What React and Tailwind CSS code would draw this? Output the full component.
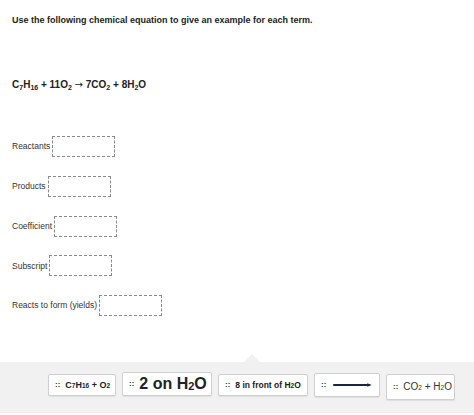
const FONT = { fontFamily: '"Liberation Sans", Arial, sans-serif' };

const TERMS = ['Reactants', 'Products', 'Coefficient', 'Subscript', 'Reacts to form (yields)'];

function Grip() {
  return <span className="text-[8px] font-bold text-[#333] leading-none mr-[5px]">::</span>;
}

function DropBox() {
  return <div className="w-[63px] h-[21px] shrink-0 border border-dashed border-[#8a8a8a]" />;
}

function Sub({ size = 'text-[6.5px]', children }) {
  return <sub className={`${size} leading-none`}>{children}</sub>;
}

function Chip({ className = '', children }) {
  return (
    <div className={`flex items-center shrink-0 whitespace-nowrap leading-none bg-white border border-[#cfcfcf] rounded-[2px] shadow-[0_1px_1px_rgba(0,0,0,0.08)] px-[6px] ${className}`}>
      <Grip />
      {children}
    </div>
  );
}

export default function App() {
  return (
    <div className="w-[474px] h-[415px] bg-white text-[#222] flex flex-col" style={FONT}>
      <div className="px-[12px] pt-[14px] flex-1">
        <p className="text-[9px] font-bold leading-[12px] whitespace-nowrap">
          Use the following chemical equation to give an example for each term.
        </p>
        <p className="mt-[53px] text-[10px] font-bold leading-[12px] whitespace-nowrap">
          C<Sub size="text-[7px]">7</Sub>H<Sub size="text-[7px]">16</Sub> + 11O<Sub size="text-[7px]">2</Sub>{' '}
          <span className="font-normal" style={{ fontFamily: '"DejaVu Sans", sans-serif' }}>→</span>{' '}
          7CO<Sub size="text-[7px]">2</Sub> + 8H<Sub size="text-[7px]">2</Sub>O
        </p>
        <div className="mt-[45px] flex flex-col gap-[18.8px]">
          {TERMS.map(label => (
            <div key={label} className="flex items-center h-[21px] gap-[2px]">
              <span className="text-[8.5px] text-[#333] whitespace-nowrap">{label}</span>
              <DropBox />
            </div>
          ))}
        </div>
      </div>

      <div className="relative bg-[#f1f1f1] h-[51px] mb-[2px]">
        <div className="absolute left-[244px] -top-[8px] w-0 h-0 border-l-[8px] border-r-[8px] border-b-[8px] border-l-transparent border-r-transparent border-b-[#f1f1f1]" />
        <div className="flex items-start gap-[6px] pl-[48px] pt-[12px]">
          <Chip className="w-[68px] h-[22px] text-[9px] font-bold">
            C<Sub>7</Sub>H<Sub>16</Sub>&nbsp;+ O<Sub>2</Sub>
          </Chip>
          <Chip className="w-[90px] h-[24px] -mt-[2px] text-[16px] font-bold">
            2 on H<Sub size="text-[11px]">2</Sub>O
          </Chip>
          <Chip className="w-[90px] h-[22px] text-[8.5px] font-bold">
            8 in front of H<Sub>2</Sub>O
          </Chip>
          <Chip className="w-[66px] h-[24px] -mt-[1px]">
            <svg width="44" height="6" viewBox="0 0 44 6" className="ml-[2px]">
              <line x1="1" y1="3" x2="40" y2="3" stroke="#1c2540" strokeWidth="2" strokeLinecap="round" />
              <path d="M38 1 L43 3 L38 5 Z" fill="#1c2540" />
            </svg>
          </Chip>
          <Chip className="w-[69px] h-[26px] text-[10px] text-[#333]">
            CO<Sub>2</Sub>&nbsp;+ H<Sub>2</Sub>O
          </Chip>
        </div>
      </div>
    </div>
  );
}
